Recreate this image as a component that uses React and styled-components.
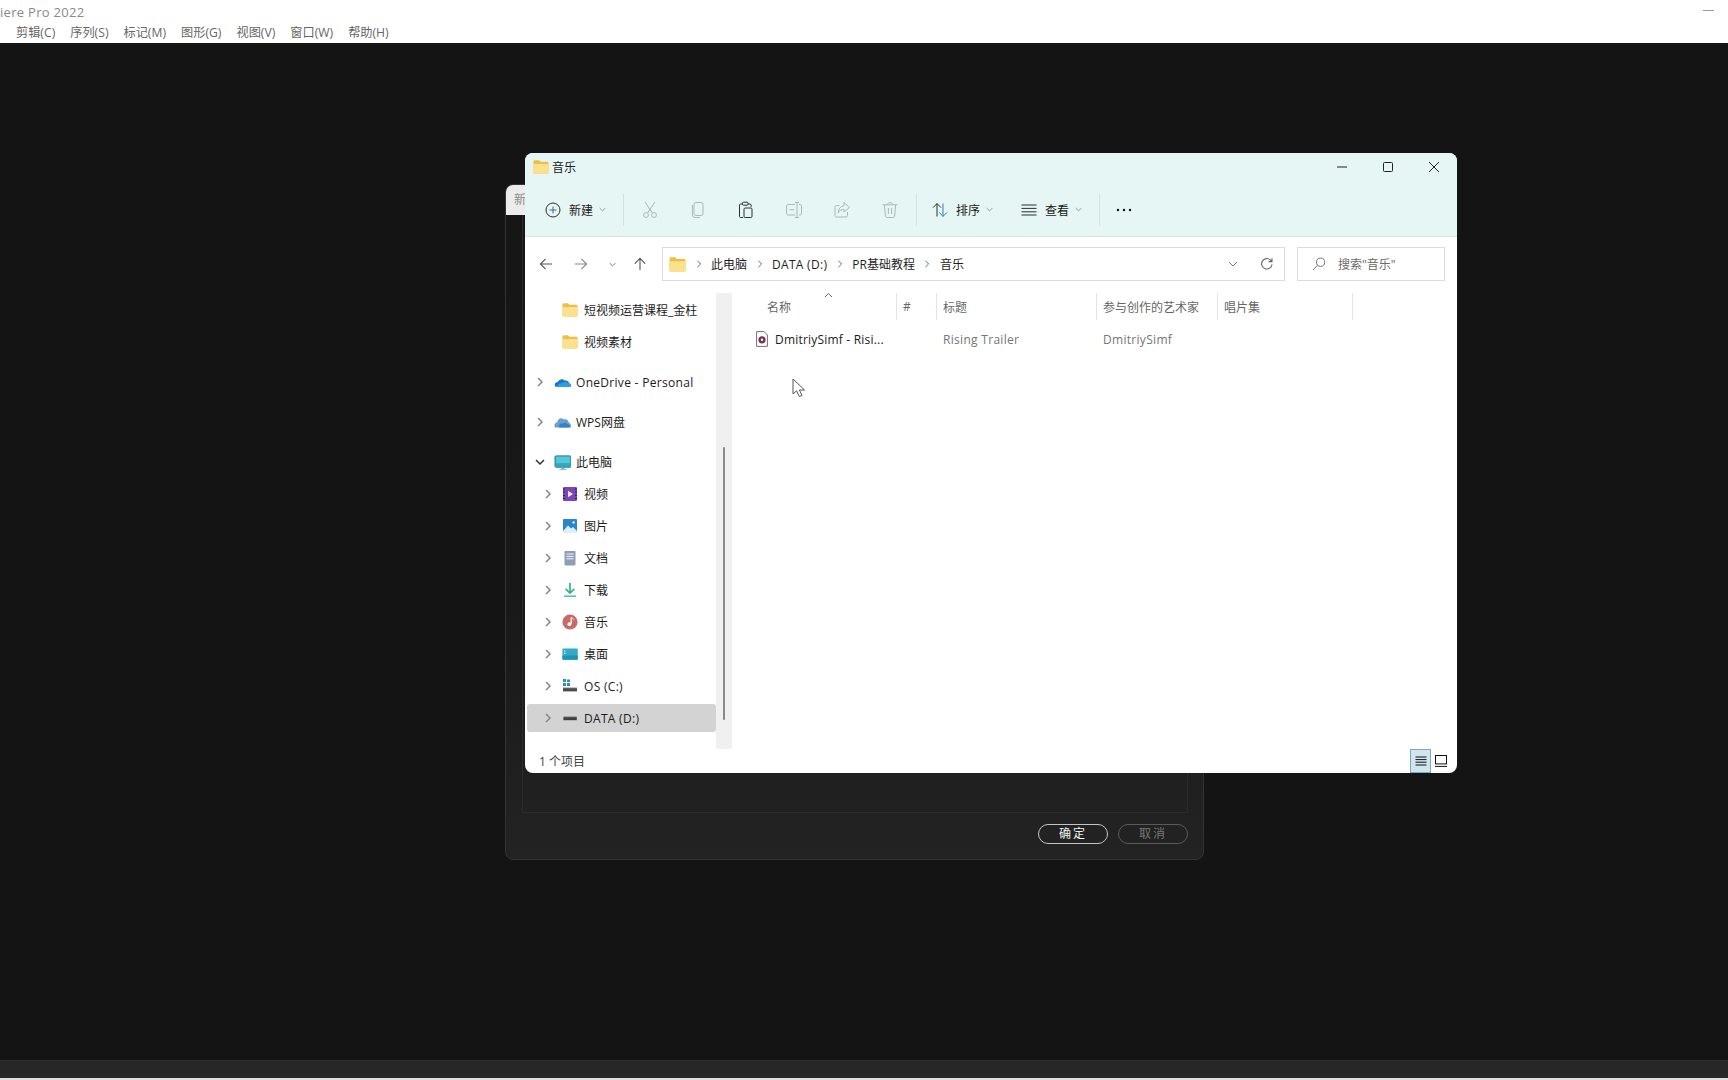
import React from 'react';
import styled, { createGlobalStyle } from 'styled-components';

const FONT = '"Open Sans", "Noto Sans CJK SC", sans-serif';

const GlobalStyle = createGlobalStyle`
  html, body {
    margin: 0;
    padding: 0;
    background: #141414;
    font-family: ${FONT};
  }
`;

// Small drawn icons
const Svg = ({ size = 16, w, h, children, vb = '0 0 16 16' }) => (
  <svg width={w || size} height={h || size} viewBox={vb} fill="none" style={{ display: 'block', flexShrink: 0 }}>
    {children}
  </svg>
);

const FolderIcon = ({ size = 16 }) => (
  <Svg size={size}>
    <path d="M0.5 2.6C0.5 1.8 1.1 1.2 2 1.2H6L7.5 2.8H14.2C15 2.8 15.5 3.3 15.5 4.1V13.4C15.5 14.1 15 14.6 14.3 14.6H1.7C1 14.6 0.5 14.1 0.5 13.4Z" fill="#eebf45" />
    <path d="M0.5 5H15.5V13.4C15.5 14.1 15 14.6 14.3 14.6H1.7C1 14.6 0.5 14.1 0.5 13.4Z" fill="#fbe08e" />
  </Svg>
);

const OneDriveIcon = () => (
  <Svg size={17}>
    <path d="M1 11.5C0 9.5 1.5 7.5 3.7 7.6C4.6 5 8 4 10 6.2C12.2 5.6 14 6.8 14.2 8.6C15.6 9 16.3 10.2 15.8 12H2.2C1.7 12 1.2 11.8 1 11.5Z" fill="#1b76c7" />
    <path d="M4 12C3 10.2 4.6 8.6 6.6 9C8.6 7.6 11.6 7.4 14.2 8.6C15.6 9 16.3 10.2 15.8 12Z" fill="#2ba1e4" />
  </Svg>
);

const WpsIcon = () => (
  <Svg size={17}>
    <path d="M0.8 12.6C-0.2 10.4 1 8 3 7.8C3.6 4.6 7 2.8 9.2 5.2C11.6 4.2 13.8 6 14 8.2C15.6 8.6 16.6 10.6 15.6 12.8H2Z" fill="#6f9fc9" />
    <path d="M5 12.8C4 10.6 6 8.4 8 9.2C9.4 7.8 11.8 8 12.6 9.6C14.2 9.4 15.4 11 14.8 12.8Z" fill="#2c82cf" />
  </Svg>
);

const MonitorIcon = () => (
  <Svg size={17}>
    <rect x="0.8" y="1.6" width="15.4" height="11" rx="1.4" fill="#2fa8c4" stroke="#39707f" strokeWidth="0.6" />
    <rect x="2" y="2.6" width="13" height="6" fill="#54c7d8" />
    <rect x="7" y="12.6" width="3" height="1.8" fill="#88a0a8" />
    <rect x="5" y="14.2" width="7" height="1" fill="#a8b8bc" />
  </Svg>
);

const VideoIcon = () => (
  <Svg size={16}>
    <rect x="1" y="1" width="14" height="14" rx="1.2" fill="#7a47b8" />
    <path d="M1 3H3M1 6H3M1 9.5H3M1 12.5H3M13 3H15M13 6H15M13 9.5H15M13 12.5H15" stroke="#2e1a5e" strokeWidth="1.1" />
    <path d="M6 4.8L11 8L6 11.2Z" fill="#f4e8ff" />
  </Svg>
);

const PictureIcon = () => (
  <Svg size={16}>
    <rect x="1" y="1" width="14" height="14" rx="1" fill="#2a86c8" />
    <path d="M1 13L6 7.5L9 10.5L11 9L15 13V15H1Z" fill="#dcf0fb" />
    <circle cx="11.6" cy="4.4" r="1.2" fill="#e8f6ff" />
  </Svg>
);

const DocIcon = () => (
  <Svg size={16}>
    <rect x="2.5" y="1" width="11" height="14.4" rx="0.8" fill="#8f9eb4" />
    <path d="M4.5 4H11.5M4.5 6.4H11.5M4.5 8.8H11.5" stroke="#f2f5f8" strokeWidth="1" />
  </Svg>
);

const DownloadIcon = () => (
  <Svg size={16}>
    <path d="M8 1V10.5M3.6 6.8L8 11L12.4 6.8" stroke="#37b28a" strokeWidth="1.7" />
    <rect x="2" y="13.4" width="12" height="1.6" fill="#5bc4a2" />
  </Svg>
);

const MusicIcon = () => (
  <Svg size={16}>
    <circle cx="8" cy="8" r="7.6" fill="#c96a68" />
    <path d="M9.2 3.4V9.8" stroke="#fff" strokeWidth="1.3" />
    <path d="M9.8 3.4C10.6 4.6 11.4 4.8 11.8 5.6" stroke="#fff" strokeWidth="1" />
    <circle cx="7.4" cy="10.2" r="1.9" fill="#fff" />
  </Svg>
);

const DesktopIcon = () => (
  <Svg size={16}>
    <rect x="0.4" y="2.4" width="15.4" height="11.4" rx="1" fill="#33aac6" />
    <rect x="0.4" y="9.4" width="15.4" height="4.4" rx="1" fill="#1f93b4" />
    <path d="M2 5H3.4M2 7.4H3.4" stroke="#e8fbff" strokeWidth="1.2" />
  </Svg>
);

const OsIcon = () => (
  <Svg size={16}>
    <path d="M1 1H4V4H1ZM5 1.4H8V4H5ZM1 5H4V8H1ZM5 5H8V8H5Z" fill="#2e8eb0" />
    <rect x="1" y="10" width="14" height="3.4" fill="#4c4c4c" />
    <rect x="1" y="9.2" width="14" height="1" fill="#b8b8b8" />
  </Svg>
);

const DriveIcon = () => (
  <Svg size={16}>
    <rect x="1.4" y="7" width="13.4" height="3.2" fill="#3f3f3f" />
    <rect x="1.4" y="6.2" width="13.4" height="1" fill="#9c9c9c" />
  </Svg>
);

const Chevron = ({ dir = 'right', size = 10, color = '#888', sw = 1.5 }) => (
  <Svg size={size} vb="0 0 10 10">
    <path
      d={dir === 'right' ? 'M3 1L7 5L3 9' : 'M1 3L5 7L9 3'}
      stroke={color}
      strokeWidth={sw}
    />
  </Svg>
);

const DISABLED = '#a9b8b8';
const DARK = '#2a2f30';

const PlusIcon = () => (
  <Svg size={16}>
    <circle cx="8" cy="8" r="7" stroke={DARK} strokeWidth="1" />
    <path d="M8 4.6V11.4M4.6 8H11.4" stroke="#3b6a7a" strokeWidth="1" />
  </Svg>
);

const CutIcon = () => (
  <Svg size={18} vb="0 0 18 18">
    <path d="M4 1L11.4 12M14 1L6.6 12" stroke={DISABLED} strokeWidth="1" />
    <circle cx="5" cy="14" r="2.4" stroke={DISABLED} />
    <circle cx="13" cy="14" r="2.4" stroke={DISABLED} />
  </Svg>
);

const CopyIcon = () => (
  <Svg size={18} vb="0 0 18 18">
    <rect x="5" y="1.5" width="9" height="13" rx="2" stroke={DISABLED} />
    <path d="M3.4 4V14C3.4 15.6 4.4 16.5 6 16.5H11" stroke={DISABLED} />
  </Svg>
);

const PasteIcon = () => (
  <Svg size={18} vb="0 0 18 18">
    <path d="M5.5 3H3.6C3 3 2.5 3.5 2.5 4.1V15.4C2.5 16 3 16.5 3.6 16.5H6M11 3H13C13.6 3 14.1 3.5 14.1 4.1V6" stroke={DARK} />
    <rect x="5.5" y="1.2" width="5.5" height="3" rx="1" stroke={DARK} />
    <rect x="7" y="7" width="8" height="9.5" rx="1.2" stroke={DARK} />
  </Svg>
);

const RenameIcon = () => (
  <Svg size={18} vb="0 0 18 18">
    <path d="M10 3.5H3C2.2 3.5 1.5 4.2 1.5 5V12.5C1.5 13.3 2.2 14 3 14H10M14 3.5H15C15.8 3.5 16.5 4.2 16.5 5V12.5C16.5 13.3 15.8 14 15 14H14M12 1.5V16.5M10 1.5H14M10 16.5H14M4.5 8.8H9" stroke={DISABLED} />
  </Svg>
);

const ShareIcon = () => (
  <Svg size={18} vb="0 0 18 18">
    <path d="M14.5 11V14.5C14.5 15.6 13.8 16 13 16H3.5C2.6 16 2 15.4 2 14.5V6C2 5.2 2.6 4.5 3.5 4.5H6.5" stroke={DISABLED} />
    <path d="M11 1.5L16.5 6.5L11 11V8.4C8.4 8.4 6.6 9.4 5.2 11.8C5.2 8.2 7.4 5.2 11 4.6Z" stroke={DISABLED} />
  </Svg>
);

const TrashIcon = () => (
  <Svg size={18} vb="0 0 18 18">
    <path d="M1.5 3.8H16.5M6.5 3.5C6.5 1 11.5 1 11.5 3.5M3.4 4L4.4 15C4.5 16 5.2 16.5 6 16.5H12C12.8 16.5 13.5 16 13.6 15L14.6 4M7.4 7V13M10.6 7V13" stroke={DISABLED} />
  </Svg>
);

const SortIcon = () => (
  <Svg size={16}>
    <path d="M5 14.5V1.6M1 5.6L5 1.6L9 5.6" stroke={DARK} />
    <path d="M11 1.5V14.4M7.2 10.4L11 14.4L15 10.4" stroke="#2d7fb6" />
  </Svg>
);

const LinesIcon = () => (
  <Svg size={16}>
    <path d="M0.5 3H15.5M0.5 6.4H15.5M0.5 9.8H15.5M0.5 13H15.5" stroke={DARK} strokeWidth="1" />
  </Svg>
);

const DotsIcon = () => (
  <Svg size={16}>
    <circle cx="2" cy="8" r="1.2" fill="#111" />
    <circle cx="8" cy="8" r="1.2" fill="#111" />
    <circle cx="14" cy="8" r="1.2" fill="#111" />
  </Svg>
);

const ArrowIcon = ({ rotate = 0, color = '#555' }) => (
  <svg width="14" height="14" viewBox="0 0 14 14" fill="none" style={{ transform: `rotate(${rotate}deg)`, display: 'block' }}>
    <path d="M13 7H1.4M6.6 1.8L1.4 7L6.6 12.2" stroke={color} strokeWidth="1.1" />
  </svg>
);

const RefreshIcon = () => (
  <Svg size={14} vb="0 0 14 14">
    <path d="M12 7.2A5.2 5.2 0 1 1 10.4 3L12 4.4M12 1.2V4.6H8.6" stroke="#666" strokeWidth="1.1" />
  </Svg>
);

const SearchIcon = () => (
  <Svg size={14} vb="0 0 14 14">
    <circle cx="8.6" cy="5.2" r="4.1" stroke="#777" />
    <path d="M5.6 8.2L1 13" stroke="#777" />
  </Svg>
);

const AudioFileIcon = () => (
  <Svg w={12} h={16} vb="0 0 12 16">
    <path d="M0.6 0.6H8L11.4 4V15.4H0.6Z" fill="#fff" stroke="#7d6a75" />
    <circle cx="6" cy="8.8" r="3.6" fill="#6d3550" />
    <circle cx="6" cy="8.8" r="1.2" fill="#fff" />
  </Svg>
);

const Page = styled.div`
  width: 1728px;
  height: 1080px;
  display: flex;
  flex-direction: column;
  overflow: hidden;
  background: #141414;
`;

const TopBar = styled.header`
  height: 43px;
  flex-shrink: 0;
  background: #fff;
  display: flex;
  flex-direction: column;
  position: relative;
`;

const AppTitle = styled.div`
  height: 24px;
  line-height: 24px;
  font-size: 13px;
  color: #8a8a8a;
  letter-spacing: 0.3px;
`;

const MenuBar = styled.nav`
  height: 19px;
  margin-top: -2px;
  display: flex;
  align-items: center;
  gap: 15px;
  padding-left: 16px;
  font-size: 12.2px;
  color: #666;
  white-space: nowrap;
`;

const MenuItem = styled.span`
  display: block;
`;

const WindowMin = styled.span`
  position: absolute;
  top: 10px;
  left: 1703px;
  width: 11px;
  height: 1px;
  background: #999;
`;

const Workspace = styled.main`
  flex: 1;
  position: relative;
`;

const BottomBar = styled.footer`
  height: 20px;
  flex-shrink: 0;
  background: #272727;
  border-top: 1px solid #2d2d2d;
  border-bottom: 2px solid #e0e0e0;
  box-sizing: border-box;
`;

const Dialog = styled.section`
  position: absolute;
  left: 505px;
  top: 141px;
  width: 699px;
  height: 676px;
  box-sizing: border-box;
  display: flex;
  flex-direction: column;
  background: linear-gradient(180deg, #161616 0%, #181818 60%, #232323 100%);
  border: 1px solid #333;
  border-radius: 8px;
  overflow: hidden;
`;

const DialogHead = styled.div`
  height: 30px;
  flex-shrink: 0;
  background: #ececec;
  color: #8a8a8a;
  font-size: 12px;
  line-height: 30px;
  padding-left: 8px;
`;

const DialogPanel = styled.div`
  flex: 1;
  margin: 0 15px 0 16px;
  border: 1px solid #2b2b2b;
  border-top: none;
`;

const DialogFoot = styled.div`
  height: 46px;
  flex-shrink: 0;
  box-sizing: border-box;
  padding: 11px 15px 0 0;
  display: flex;
  justify-content: flex-end;
  align-items: flex-start;
  gap: 10px;
`;

const PillButton = styled.button`
  width: 70px;
  height: 20px;
  padding: 0;
  font-family: ${FONT};
  font-size: 12px;
  line-height: 16px;
  border-radius: 10px;
  background: transparent;
  color: ${(p) => (p.$primary ? '#f2f2f2' : '#777')};
  border: 1.5px solid ${(p) => (p.$primary ? '#c4c4c4' : '#5a5a5a')};
  letter-spacing: 2px;
`;

const Explorer = styled.section`
  position: absolute;
  left: 525px;
  top: 110px;
  width: 932px;
  height: 620px;
  display: flex;
  flex-direction: column;
  background: #fff;
  border-radius: 8px;
  overflow: hidden;
  font-size: 12px;
  color: #1c1c1c;
`;

const Ribbon = styled.div`
  height: 84px;
  flex-shrink: 0;
  background: #e5f6f4;
  border-bottom: 1px solid #d8e4e4;
  box-sizing: border-box;
`;

const TitleRow = styled.div`
  height: 28px;
  display: flex;
  align-items: center;
  padding-left: 8px;
  gap: 3px;
`;

const WinTitle = styled.span`
  flex: 1;
  font-size: 12px;
`;

const WinControls = styled.div`
  display: flex;
  height: 100%;
`;

const WinButton = styled.span`
  width: 46px;
  height: 28px;
  display: flex;
  align-items: center;
  justify-content: center;
`;

const ToolRow = styled.div`
  height: 55px;
  display: flex;
  align-items: center;
  padding: 2px 0 0 20px;
  box-sizing: border-box;
`;

const TextTool = styled.div`
  width: ${(p) => p.$width}px;
  display: flex;
  align-items: center;
  flex-shrink: 0;
  font-size: 12px;
  color: #1a1a1a;
  span {
    margin: 0 6px 0 8px;
  }
`;

const IconTool = styled.div`
  width: 48px;
  display: flex;
  justify-content: center;
  flex-shrink: 0;
`;

const ToolSep = styled.i`
  display: block;
  width: 1px;
  height: 32px;
  flex-shrink: 0;
  background: #d2e0e0;
  margin: 0 ${(p) => p.$right || 0}px 0 ${(p) => p.$left || 0}px;
`;

const AddressRow = styled.div`
  height: 56px;
  flex-shrink: 0;
  box-sizing: border-box;
  padding: 10px 12px 12px 5px;
  display: flex;
  align-items: stretch;
`;

const NavButton = styled.div`
  width: ${(p) => p.$width}px;
  margin-left: ${(p) => p.$left || 0}px;
  flex-shrink: 0;
  display: flex;
  align-items: center;
  justify-content: center;
`;

const AddressBox = styled.div`
  flex: 1;
  margin-left: 6px;
  border: 1px solid #dcdcdc;
  display: flex;
  align-items: center;
  padding: 0 10px 0 6px;
  gap: 8.5px;
  font-size: 12px;
`;

const Crumb = styled.span`
  color: #1f1f1f;
  white-space: nowrap;
  letter-spacing: ${(p) => (p.$latin ? '0.3px' : '0')};
`;

const AddressTail = styled.div`
  margin-left: auto;
  display: flex;
  align-items: center;
  gap: 22px;
`;

const SearchBox = styled.div`
  width: 148px;
  flex-shrink: 0;
  margin-left: 12px;
  box-sizing: border-box;
  border: 1px solid #dcdcdc;
  display: flex;
  align-items: center;
  gap: 12px;
  padding-left: 14px;
  color: #6b6b6b;
  font-size: 12px;
`;

const Body = styled.div`
  flex: 1;
  display: flex;
  min-height: 0;
`;

const Sidebar = styled.div`
  width: 191px;
  flex-shrink: 0;
  padding: 1px 0 0 2px;
  box-sizing: border-box;
  display: flex;
  flex-direction: column;
`;

const NavRow = styled.div`
  height: 28px;
  flex-shrink: 0;
  margin: ${(p) => (p.$gap ? 10 : 2)}px 0 2px;
  display: flex;
  align-items: center;
  padding-left: ${(p) => (p.$child ? 15 : 6)}px;
  border-radius: 3px;
  background: ${(p) => (p.$active ? '#d3d3d3' : 'transparent')};
  color: #1c1c1c;
  font-size: 12px;
  white-space: nowrap;
  letter-spacing: ${(p) => (p.$latin ? '0.3px' : '0')};
`;

const NavArrow = styled.span`
  width: ${(p) => (p.$child ? 12 : 14)}px;
  margin-right: ${(p) => (p.$child ? 8 : 7)}px;
  flex-shrink: 0;
  display: flex;
  justify-content: center;
`;

const NavIcon = styled.span`
  width: 22px;
  flex-shrink: 0;
  display: flex;
  align-items: center;
`;

const ScrollTrack = styled.div`
  width: 16px;
  flex-shrink: 0;
  background: #f0f0f0;
  display: flex;
  justify-content: center;
`;

const ScrollThumb = styled.div`
  width: 2px;
  height: 273px;
  margin-top: 154px;
  background: #8a8a8a;
  border-radius: 1px;
`;

const Content = styled.div`
  flex: 1;
  position: relative;
  padding-left: 29px;
`;

const SortCaret = styled.span`
  position: absolute;
  left: 92px;
  top: -2px;
`;

const COLUMNS = '136px 40px 160px 121px 135px';

const HeaderRow = styled.div`
  display: grid;
  grid-template-columns: ${COLUMNS};
  height: 27px;
`;

const HeaderCell = styled.div`
  padding-left: 6px;
  display: flex;
  align-items: center;
  border-right: 1px solid #e4e4e4;
  color: #666;
  font-size: 12px;
  white-space: nowrap;
`;

const FileRow = styled.div`
  display: grid;
  grid-template-columns: ${COLUMNS};
  height: 26px;
  margin: 6px 0 0 -3px;
  align-items: center;
`;

const NameCell = styled.div`
  display: flex;
  align-items: center;
  gap: 7px;
  margin-left: -2px;
  white-space: nowrap;
  color: #1c1c1c;
  letter-spacing: 0.2px;
`;

const InfoCell = styled.div`
  padding-left: 9px;
  color: #767676;
  white-space: nowrap;
  letter-spacing: 0.3px;
`;

const Pointer = styled.svg`
  position: absolute;
  left: 60px;
  top: 85px;
`;

const StatusBar = styled.div`
  height: 24px;
  flex-shrink: 0;
  display: flex;
  align-items: center;
  justify-content: space-between;
  padding-left: 14px;
  color: #444;
  font-size: 12px;
`;

const ViewSwitch = styled.div`
  display: flex;
  align-items: center;
  height: 100%;
  padding-right: 6px;
`;

const ViewButton = styled.div`
  width: ${(p) => (p.$active ? 21 : 20)}px;
  height: 100%;
  box-sizing: border-box;
  display: flex;
  align-items: center;
  justify-content: center;
  background: ${(p) => (p.$active ? '#cfe6ef' : 'transparent')};
  border: 1px solid ${(p) => (p.$active ? '#7fa9b8' : 'transparent')};
`;

const navItems = [
  { label: '短视频运营课程_金柱', icon: <FolderIcon />, child: true, noArrow: true },
  { label: '视频素材', icon: <FolderIcon />, child: true, noArrow: true },
  { label: 'OneDrive - Personal', icon: <OneDriveIcon />, gap: true, latin: true },
  { label: 'WPS网盘', icon: <WpsIcon />, gap: true },
  { label: '此电脑', icon: <MonitorIcon />, gap: true, open: true },
  { label: '视频', icon: <VideoIcon />, child: true },
  { label: '图片', icon: <PictureIcon />, child: true },
  { label: '文档', icon: <DocIcon />, child: true },
  { label: '下载', icon: <DownloadIcon />, child: true },
  { label: '音乐', icon: <MusicIcon />, child: true },
  { label: '桌面', icon: <DesktopIcon />, child: true },
  { label: 'OS (C:)', icon: <OsIcon />, child: true, latin: true },
  { label: 'DATA (D:)', icon: <DriveIcon />, child: true, active: true, latin: true },
];

const menus = ['剪辑(C)', '序列(S)', '标记(M)', '图形(G)', '视图(V)', '窗口(W)', '帮助(H)'];
const crumbs = ['此电脑', 'DATA (D:)', 'PR基础教程', '音乐'];
const columns = ['名称', '#', '标题', '参与创作的艺术家', '唱片集'];

const App = () => {
  return (
    <Page>
      <GlobalStyle />
      <TopBar>
        <AppTitle>iere Pro 2022</AppTitle>
        <MenuBar>
          {menus.map((m) => (
            <MenuItem key={m}>{m}</MenuItem>
          ))}
        </MenuBar>
        <WindowMin />
      </TopBar>

      <Workspace>
        <Dialog>
          <DialogHead>新</DialogHead>
          <DialogPanel />
          <DialogFoot>
            <PillButton $primary>确定</PillButton>
            <PillButton>取消</PillButton>
          </DialogFoot>
        </Dialog>

        <Explorer>
          <Ribbon>
            <TitleRow>
              <FolderIcon size={16} />
              <WinTitle>音乐</WinTitle>
              <WinControls>
                <WinButton>
                  <Svg size={12} vb="0 0 12 12"><path d="M1 6H11" stroke="#222" /></Svg>
                </WinButton>
                <WinButton>
                  <Svg size={12} vb="0 0 12 12"><rect x="1.5" y="1.5" width="9" height="9" rx="1" stroke="#222" /></Svg>
                </WinButton>
                <WinButton>
                  <Svg size={12} vb="0 0 12 12"><path d="M1 1L11 11M11 1L1 11" stroke="#222" /></Svg>
                </WinButton>
              </WinControls>
            </TitleRow>
            <ToolRow>
              <TextTool $width={78}>
                <PlusIcon />
                <span>新建</span>
                <Chevron dir="down" size={7} color="#777" sw={1} />
              </TextTool>
              <ToolSep $left={0} $right={2} />
              <IconTool><CutIcon /></IconTool>
              <IconTool><CopyIcon /></IconTool>
              <IconTool><PasteIcon /></IconTool>
              <IconTool><RenameIcon /></IconTool>
              <IconTool><ShareIcon /></IconTool>
              <IconTool><TrashIcon /></IconTool>
              <ToolSep $left={2} $right={15} />
              <TextTool $width={89}>
                <SortIcon />
                <span>排序</span>
                <Chevron dir="down" size={7} color="#777" sw={1} />
              </TextTool>
              <TextTool $width={78}>
                <LinesIcon />
                <span>查看</span>
                <Chevron dir="down" size={7} color="#777" sw={1} />
              </TextTool>
              <ToolSep />
              <IconTool><DotsIcon /></IconTool>
            </ToolRow>
          </Ribbon>

          <AddressRow>
            <NavButton $width={32}><ArrowIcon /></NavButton>
            <NavButton $width={32} $left={3}><ArrowIcon rotate={180} color="#888" /></NavButton>
            <NavButton $width={24} $left={3}><Chevron dir="down" size={7} color="#666" sw={1.2} /></NavButton>
            <NavButton $width={32}><ArrowIcon rotate={90} /></NavButton>
            <AddressBox>
              <FolderIcon size={17} />
              {crumbs.map((c) => (
                <React.Fragment key={c}>
                  <Chevron size={8} color="#555" sw={1.1} />
                  <Crumb $latin={c.startsWith('DATA')}>{c}</Crumb>
                </React.Fragment>
              ))}
              <AddressTail>
                <Chevron dir="down" size={10} color="#777" sw={1} />
                <RefreshIcon />
              </AddressTail>
            </AddressBox>
            <SearchBox>
              <SearchIcon />
              搜索"音乐"
            </SearchBox>
          </AddressRow>

          <Body>
            <Sidebar>
              {navItems.map((item) => (
                <NavRow key={item.label} $child={item.child} $gap={item.gap} $active={item.active} $latin={item.latin}>
                  <NavArrow $child={item.child}>
                    {!item.noArrow && (
                      <Chevron
                        dir={item.open ? 'down' : 'right'}
                        size={10}
                        color={item.open ? '#333' : '#888'}
                      />
                    )}
                  </NavArrow>
                  <NavIcon>{item.icon}</NavIcon>
                  {item.label}
                </NavRow>
              ))}
            </Sidebar>
            <ScrollTrack>
              <ScrollThumb />
            </ScrollTrack>
            <Content>
              <SortCaret>
                <Svg size={9} vb="0 0 9 9"><path d="M1 6L4.5 2.5L8 6" stroke="#666" /></Svg>
              </SortCaret>
              <HeaderRow>
                {columns.map((c) => (
                  <HeaderCell key={c}>{c}</HeaderCell>
                ))}
              </HeaderRow>
              <FileRow>
                <NameCell>
                  <AudioFileIcon />
                  DmitriySimf - Risi...
                </NameCell>
                <span />
                <InfoCell>Rising Trailer</InfoCell>
                <InfoCell>DmitriySimf</InfoCell>
              </FileRow>
              <Pointer width="15" height="20" viewBox="0 0 15 20" fill="none">
                <path d="M1 1V16L4.6 12.8L7.4 18.6L10 17.4L7.4 12H12.6Z" fill="#fff" stroke="#555" />
              </Pointer>
            </Content>
          </Body>

          <StatusBar>
            1 个项目
            <ViewSwitch>
              <ViewButton $active>
                <Svg size={12} vb="0 0 12 12">
                  <path d="M0.5 2H11.5M0.5 4.6H11.5M0.5 7.2H11.5M0.5 10H11.5" stroke="#111" />
                </Svg>
              </ViewButton>
              <ViewButton>
                <Svg size={12} vb="0 0 12 12">
                  <rect x="0.5" y="0.5" width="11" height="8.4" stroke="#111" />
                  <path d="M0 11.4H12" stroke="#111" />
                </Svg>
              </ViewButton>
            </ViewSwitch>
          </StatusBar>
        </Explorer>
      </Workspace>

      <BottomBar />
    </Page>
  );
};

export default App;
